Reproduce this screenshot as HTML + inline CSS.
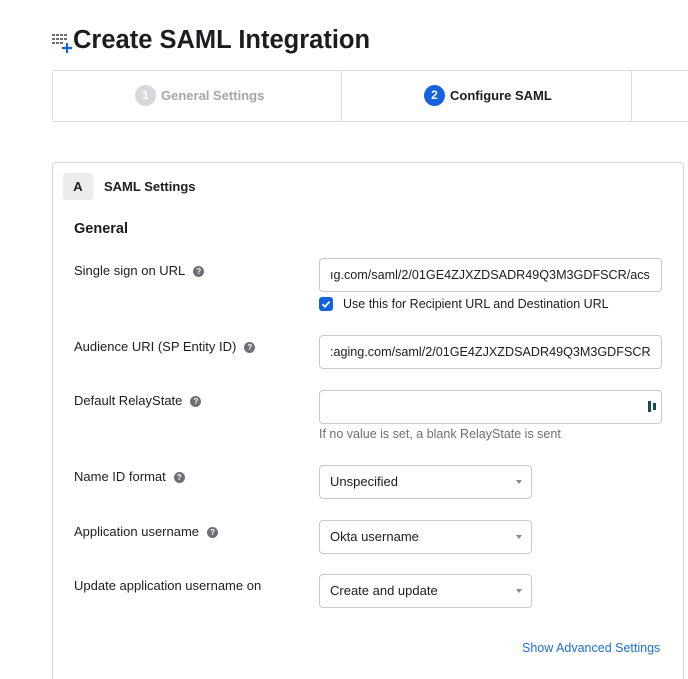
<!DOCTYPE html>
<html><head><style>
*{box-sizing:border-box;margin:0;padding:0}
html{width:688px;height:679px;overflow:hidden}
body{width:688px;height:679px;overflow:hidden;background:#fff;font-family:"Liberation Sans",sans-serif;color:#1d1d21;position:relative}
.a{position:absolute}
.lbl{position:absolute;left:74px;font-size:13px;color:#1d1d21}
.q{display:inline-block;width:11px;height:11px;border-radius:50%;background:#6e6e78;color:#fff;font-size:8px;font-weight:bold;text-align:center;line-height:11px;vertical-align:1px;margin-left:8px}
.in{position:absolute;left:319px;width:343px;height:34px;border:1px solid #c9c9ce;border-radius:4px;font-size:12.6px;padding-left:10px;line-height:32px;overflow:hidden;white-space:nowrap;color:#1d1d21}
.sel{position:absolute;left:319px;width:213px;height:34px;border:1px solid #c9c9ce;border-radius:4px;font-size:13px;padding-left:10px;line-height:32px}
.sel:after{content:"";position:absolute;right:9px;top:14px;border-left:3px solid transparent;border-right:3px solid transparent;border-top:4px solid #8a8a92}
</style></head><body>
<svg class="a" style="left:52px;top:34px" width="22" height="20" viewBox="0 0 22 20">
<g fill="#6e6e78"><rect x="0" y="0" width="3" height="2"/><rect x="4" y="0" width="3" height="2"/><rect x="8" y="0" width="3" height="2"/><rect x="12" y="0" width="3" height="2"/>
<rect x="0" y="4" width="3" height="2"/><rect x="4" y="4" width="3" height="2"/><rect x="8" y="4" width="3" height="2"/><rect x="12" y="4" width="3" height="2"/>
<rect x="0" y="8" width="3" height="2"/><rect x="4" y="8" width="3" height="2"/><rect x="8" y="8" width="3" height="2"/></g>
<path d="M15 9v10M10 14h10" stroke="#1662dd" stroke-width="2.2"/></svg>
<div class="a" style="left:73px;top:26px;font-size:25.5px;font-weight:bold;color:#1d1d21">Create SAML Integration</div>
<div class="a" style="left:52px;top:70px;width:650px;height:52px;border:1px solid #dcdce0;border-radius:3px"></div>
<div class="a" style="left:341px;top:70px;width:1px;height:52px;background:#dcdce0"></div>
<div class="a" style="left:631px;top:70px;width:1px;height:52px;background:#dcdce0"></div>
<div class="a" style="left:135px;top:85px;width:21px;height:21px;border-radius:50%;background:#d7d7dc;color:#fff;font-size:12px;text-align:center;line-height:21px;font-weight:bold">1</div>
<div class="a" style="left:161px;top:88px;font-size:13px;color:#a5a5ad;font-weight:bold">General Settings</div>
<div class="a" style="left:424px;top:85px;width:21px;height:21px;border-radius:50%;background:#1662dd;color:#fff;font-size:12px;text-align:center;line-height:21px;font-weight:bold">2</div>
<div class="a" style="left:450px;top:88px;font-size:13px;color:#1d1d21;font-weight:bold">Configure SAML</div>
<div class="a" style="left:52px;top:162px;width:632px;height:540px;border:1px solid #d7d7dc;border-radius:4px"></div>
<div class="a" style="left:63px;top:173px;width:30px;height:27px;background:#ececef;border-radius:3px;font-size:13px;font-weight:bold;text-align:center;line-height:27px">A</div>
<div class="a" style="left:104px;top:179px;font-size:13px;font-weight:bold">SAML Settings</div>
<div class="a" style="left:74px;top:221px;font-size:14.5px;font-weight:bold">General</div>
<div class="lbl" style="top:263px">Single sign on URL<span class="q">?</span></div>
<div class="in" style="top:258px">ıg.com/saml/2/01GE4ZJXZDSADR49Q3M3GDFSCR/acs</div>
<div class="a" style="left:319px;top:297px;width:14px;height:14px;border-radius:3px;background:#1662dd"></div>
<svg class="a" style="left:319px;top:297px" width="14" height="14"><path d="M3.5 7.2l2.5 2.5 4.5-5" stroke="#fff" stroke-width="1.8" fill="none"/></svg>
<div class="a" style="left:343px;top:297px;font-size:12.5px">Use this for Recipient URL and Destination URL</div>
<div class="lbl" style="top:339px">Audience URI (SP Entity ID)<span class="q">?</span></div>
<div class="in" style="top:335px">:aging.com/saml/2/01GE4ZJXZDSADR49Q3M3GDFSCR</div>
<div class="lbl" style="top:393px">Default RelayState<span class="q">?</span></div>
<div class="in" style="top:390px"></div>
<div class="a" style="left:648px;top:401px;width:3px;height:11px;background:#1a4a5a"></div>
<div class="a" style="left:653px;top:403px;width:3px;height:7px;background:#1a4a5a"></div>
<div class="a" style="left:319px;top:427px;font-size:12.5px;color:#6e6e78">If no value is set, a blank RelayState is sent</div>
<div class="lbl" style="top:469px">Name ID format<span class="q">?</span></div>
<div class="sel" style="top:465px">Unspecified</div>
<div class="lbl" style="top:524px">Application username<span class="q">?</span></div>
<div class="sel" style="top:520px">Okta username</div>
<div class="lbl" style="top:578px">Update application username on</div>
<div class="sel" style="top:574px">Create and update</div>
<div class="a" style="left:522px;top:641px;font-size:12.5px;color:#1f6fd6">Show Advanced Settings</div>
</body></html>
